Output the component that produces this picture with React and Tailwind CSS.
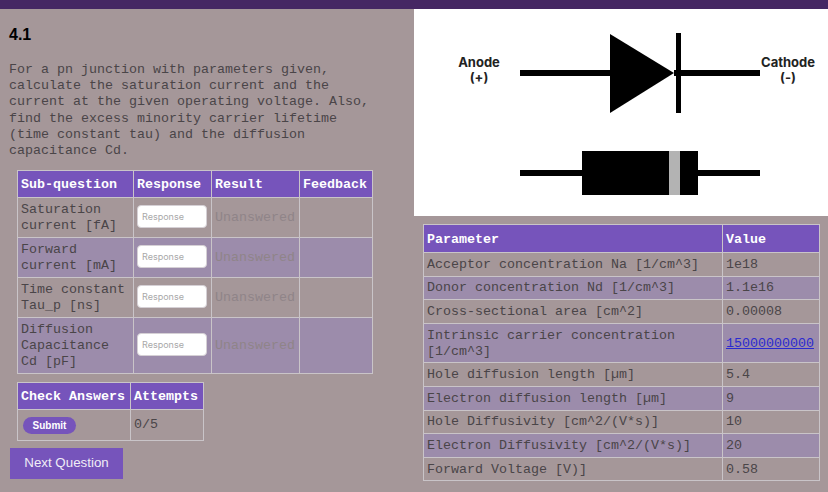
const subQuestions = [
    ['Saturation current [fA]', 'h-10'],
    ['Forward current [mA]', 'h-10'],
    ['Time constant Tau_p [ns]', 'h-10'],
    ['Diffusion Capacitance Cd [pF]', 'h-[55px]'],
];

const parameters = [
    ['Acceptor concentration Na [1/cm^3]', '1e18'],
    ['Donor concentration Nd [1/cm^3]', '1.1e16'],
    ['Cross-sectional area [cm^2]', '0.00008'],
    ['Intrinsic carrier concentration [1/cm^3]', '15000000000', true],
    ['Hole diffusion length [µm]', '5.4'],
    ['Electron diffusion length [µm]', '9'],
    ['Hole Diffusivity [cm^2/(V*s)]', '10'],
    ['Electron Diffusivity [cm^2/(V*s)]', '20'],
    ['Forward Voltage [V)]', '0.58'],
];

const th = 'border border-[#c9c4c8] bg-[#7654bb] px-[3px] pt-[6px] pb-[4px] text-left font-bold text-white';
const td = 'border border-[#c9c4c8] px-[3px] pt-[3.8px] pb-[2.8px] text-[#4a4548]';

function DiodeDrawing() {
    return (
        <svg viewBox="0 0 414 207" className="h-[207px] w-[414px] bg-white">
            <rect x="106" y="61" width="90" height="6" fill="#000" />
            <polygon points="196,25 196,104 260,64" fill="#000" />
            <rect x="262" y="24" width="5" height="80" fill="#000" />
            <rect x="260" y="61" width="86" height="6" fill="#000" />
            <rect x="106" y="161" width="62" height="6" fill="#000" />
            <rect x="168" y="142" width="87" height="44" fill="#000" />
            <rect x="255" y="142" width="11" height="44" fill="#b3b3b3" />
            <rect x="266" y="142" width="18" height="44" fill="#000" />
            <rect x="284" y="161" width="62" height="6" fill="#000" />
            <g fontFamily="Inter, sans-serif" fontWeight="700" fontSize="13" textAnchor="middle" fill="#222">
                <text x="65" y="58">Anode</text>
                <text x="65" y="73">(+)</text>
                <text x="374" y="58">Cathode</text>
                <text x="374" y="73">(-)</text>
            </g>
        </svg>
    );
}

export default function App() {
    return (
        <div className="h-[492px] w-[828px] overflow-hidden bg-[#a59799] font-['Liberation_Mono',monospace] text-[13.33px] leading-[16px]">
            <div className="h-[9px] bg-[#452763]" />
            <div className="flex">
                <div className="w-[414px] shrink-0 pl-[9px]">
                    <h1 className="mt-[17px] font-['Liberation_Sans',sans-serif] text-[16px] leading-[18px] font-bold text-black">4.1</h1>
                    <p className="mt-[18px] w-[372px] leading-[16.2px] text-[#4a4548]">
                        For a pn junction with parameters given, calculate the saturation current and the current at the given operating voltage. Also, find the excess minority carrier lifetime (time constant tau) and the diffusion capacitance Cd.
                    </p>
                    <table className="mt-[11px] ml-[8px] w-[356px] table-fixed border-collapse">
                        <thead>
                            <tr className="h-[27px]">
                                <th className={`${th} w-[116px]`}>Sub-question</th>
                                <th className={`${th} w-[78px]`}>Response</th>
                                <th className={`${th} w-[88px]`}>Result</th>
                                <th className={th}>Feedback</th>
                            </tr>
                        </thead>
                        <tbody>
                            {subQuestions.map(([label, height], i) => (
                                <tr key={label} className={i % 2 ? 'bg-[#9c8cab]' : ''}>
                                    <td className={`${td} ${height}`}>{label}</td>
                                    <td className="border border-[#c9c4c8] px-[3px] pt-[2px] pb-[4px]">
                                        <input placeholder="Response" className="h-[23px] w-[70px] rounded-[4px] border border-[#d5d0d5] bg-white px-[4px] font-['Inter',sans-serif] text-[9px] placeholder:text-[#a8a8a8]" />
                                    </td>
                                    <td className={`${td} text-[#8f8488]`}>Unanswered</td>
                                    <td className={td} />
                                </tr>
                            ))}
                        </tbody>
                    </table>
                    <table className="mt-[8px] ml-[8px] w-[187px] table-fixed border-collapse">
                        <thead>
                            <tr className="h-[27px]">
                                <th className={`${th} w-[113px]`}>Check Answers</th>
                                <th className={th}>Attempts</th>
                            </tr>
                        </thead>
                        <tbody>
                            <tr className="h-[31px]">
                                <td className={`${td} px-[5px]`}>
                                    <button className="h-[17px] w-[53px] rounded-full bg-[#7654bb] font-['Liberation_Sans',sans-serif] text-[10px] leading-[17px] font-bold text-white">Submit</button>
                                </td>
                                <td className={td}>0/5</td>
                            </tr>
                        </tbody>
                    </table>
                    <button className="mt-[7px] ml-px h-[31px] w-[113px] bg-[#7654bb] font-['Liberation_Sans',sans-serif] text-[13.33px] text-[#f0ecf6]">Next Question</button>
                </div>
                <div className="w-[414px] shrink-0">
                    <DiodeDrawing />
                    <table className="mt-[8px] ml-[9px] w-[397px] table-fixed border-collapse">
                        <thead>
                            <tr className="h-[28px]">
                                <th className={`${th} w-[299px]`}>Parameter</th>
                                <th className={th}>Value</th>
                            </tr>
                        </thead>
                        <tbody>
                            {parameters.map(([label, value, isLink], i) => (
                                <tr key={label} className={i % 2 ? 'bg-[#9c8cab]' : ''}>
                                    <td className={td}>{label}</td>
                                    <td className={td}>
                                        {isLink ? <a href="#" className="text-[#2a2ad0] underline">{value}</a> : value}
                                    </td>
                                </tr>
                            ))}
                        </tbody>
                    </table>
                </div>
            </div>
        </div>
    );
}
